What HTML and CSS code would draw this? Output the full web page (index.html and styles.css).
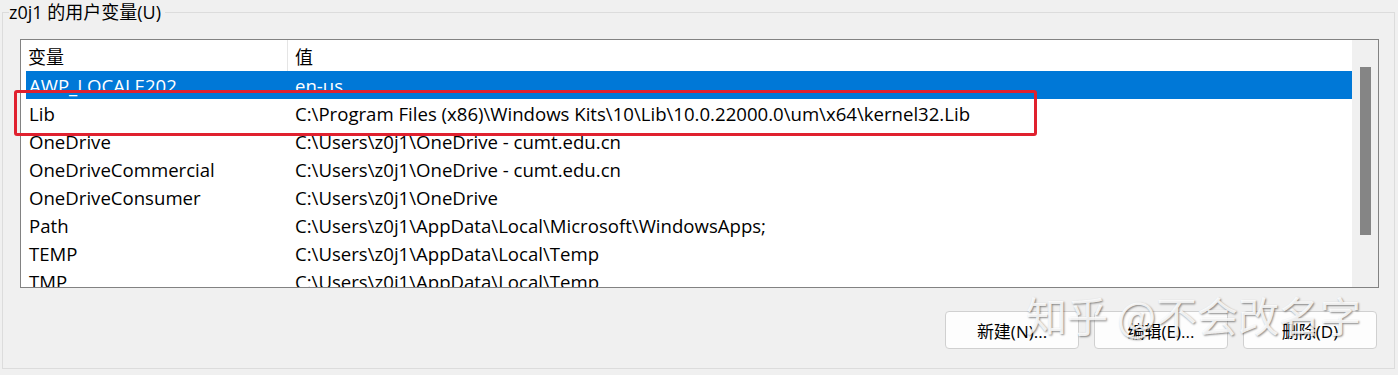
FILE: index.html
```html
<!DOCTYPE html>
<html lang="zh-CN">
<head>
  <meta charset="UTF-8">
  <title>环境变量</title>
  <link rel="stylesheet" href="styles.css">
</head>
<body>
  <fieldset class="group">
    <legend>z0j1 的用户变量(U)</legend>

    <div class="listbox">
      <div class="list">
        <div class="list-header">
          <div class="head-name">变量</div>
          <div class="head-value">值</div>
        </div>
        <div class="rows">
          <div class="row selected"><span>AWP_LOCALE202</span><span>en-us</span></div>
          <div class="row"><span>Lib</span><span>C:\Program Files (x86)\Windows Kits\10\Lib\10.0.22000.0\um\x64\kernel32.Lib</span></div>
          <div class="row"><span>OneDrive</span><span>C:\Users\z0j1\OneDrive - cumt.edu.cn</span></div>
          <div class="row"><span>OneDriveCommercial</span><span>C:\Users\z0j1\OneDrive - cumt.edu.cn</span></div>
          <div class="row"><span>OneDriveConsumer</span><span>C:\Users\z0j1\OneDrive</span></div>
          <div class="row"><span>Path</span><span>C:\Users\z0j1\AppData\Local\Microsoft\WindowsApps;</span></div>
          <div class="row"><span>TEMP</span><span>C:\Users\z0j1\AppData\Local\Temp</span></div>
          <div class="row"><span>TMP</span><span>C:\Users\z0j1\AppData\Local\Temp</span></div>
        </div>
      </div>
      <div class="scrollbar"><div class="thumb"></div></div>
    </div>

    <div class="buttons">
      <button>新建(N)...</button>
      <button>编辑(E)...</button>
      <button>删除(D)</button>
    </div>
  </fieldset>

  <!-- annotation + watermark on top of the dialog -->
  <div class="highlight"></div>
  <div class="watermark">知乎 @不会改名字</div>
</body>
</html>
```

FILE: styles.css
```css
body {
  margin: 0;
  width: 1398px;
  height: 375px;
  background: #f0f0f0;
  font-family: "Open Sans", "Noto Sans CJK SC", sans-serif;
  color: #000;
  position: relative;
  overflow: hidden;
}
.group {
  box-sizing: border-box;
  height: 369px;
  margin: 0 3px 0 2px;
  padding: 0 0 0 6px;
  border: 1px solid #dcdcdc;
  min-width: 0;
}
.group legend {
  font-size: 18px;
  line-height: 24px;
  padding: 0 4px 0 0;
}
.listbox {
  box-sizing: border-box;
  height: 249px;
  margin: 15px 15px 0 11px;
  border: 1px solid #828282;
  background: #fff;
  display: flex;
}
.list {
  flex: 1;
  overflow: hidden;
  font-size: 18.6px;
}
.list-header {
  display: grid;
  grid-template-columns: 267px 1fr;
  height: 31px;
  font-size: 18px;
}
.list-header div {
  display: flex;
  align-items: center;
  padding-left: 7px;
}
.head-name {
  border-right: 1px solid #e5e5e5;
}
.rows {
  margin-left: 5px;
}
.row {
  display: grid;
  grid-template-columns: 261px 1fr;
  height: 28px;
  align-items: center;
  white-space: nowrap;
}
.row span:first-child {
  padding-left: 3px;
}
.row span:last-child {
  padding-left: 8px;
}
.row.selected {
  background: #0078d7;
  color: #fff;
}
.scrollbar {
  width: 26px;
  background: #f0f0f0;
}
.thumb {
  width: 11px;
  height: 168px;
  margin: 27px auto 0;
  background: #858585;
}
.buttons {
  display: flex;
  justify-content: flex-end;
  gap: 15px;
  margin: 23px 17px 0 0;
}
.buttons button {
  width: 134px;
  height: 38px;
  background: #fdfdfd;
  border: 1px solid #d0d0d0;
  border-radius: 4px;
  font-family: "Open Sans", "Noto Sans CJK SC", sans-serif;
  font-size: 17px;
  color: #000;
  padding: 0;
}
.highlight {
  position: absolute;
  left: 14px;
  top: 90px;
  width: 1023px;
  height: 46px;
  box-sizing: border-box;
  border: 3px solid #e0212f;
  border-radius: 3px;
}
.watermark {
  position: absolute;
  left: 1026px;
  top: 294px;
  font-family: "Noto Sans CJK SC", sans-serif;
  font-size: 41px;
  line-height: 1;
  color: rgba(255, 255, 255, 0.85);
  text-shadow: 1px 1px 2px rgba(0, 0, 0, 0.45);
  white-space: nowrap;
}
```
